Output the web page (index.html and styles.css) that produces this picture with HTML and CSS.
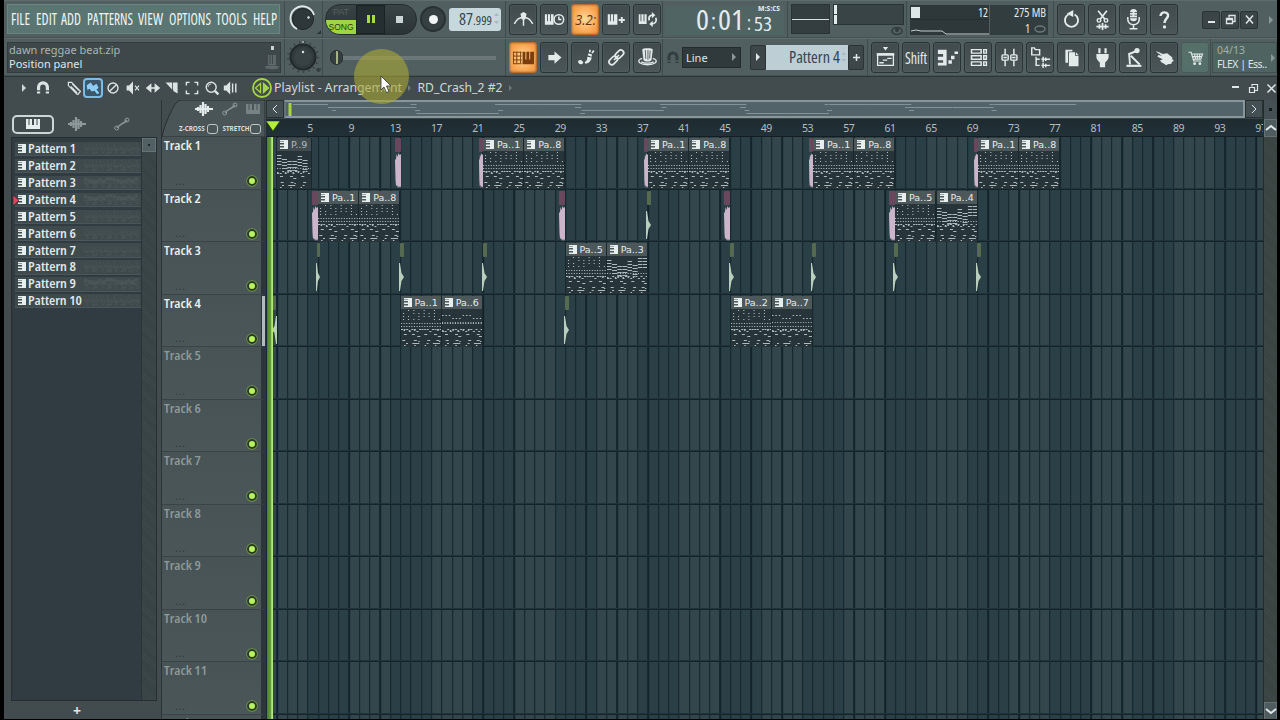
FILE: index.html
```html
<!DOCTYPE html>
<html lang="en">
<head>
    <meta charset="UTF-8">
    <title>Playlist - Arrangement</title>
    <link rel="stylesheet" href="styles.css">
</head>
<body>
<div class="app">
    <header class="toolbar">
        <div class="bar">
            <div class="panel menu-panel">
                <nav class="menu">
                    <svg width="273" height="29" class="cond menu-text">
                        <text x="3" y="19.500" textLength="19">FILE</text>
                        <text x="28" y="19.500" textLength="21">EDIT</text>
                        <text x="53" y="19.500" textLength="20">ADD</text>
                        <text x="79" y="19.500" textLength="46">PATTERNS</text>
                        <text x="130" y="19.500" textLength="25">VIEW</text>
                        <text x="161" y="19.500" textLength="42">OPTIONS</text>
                        <text x="208" y="19.500" textLength="31">TOOLS</text>
                        <text x="245" y="19.500" textLength="24">HELP</text>
                    </svg>
                </nav>
            </div>
            <div class="panel knob-panel">
                <svg width="36" height="36" viewBox="0 0 36 36">
                    <circle cx="17" cy="18" r="10.5" fill="#2e3739" stroke="#1f2628"/>
                    <path d="M11 28A12 12 0 1 1 28 14" fill="none" stroke="#dfe8e8" stroke-width="1.8"/>
                    <circle cx="22.5" cy="16.500" r="1.2" fill="#dfe8e8"/>
                    <path d="M35 29v4h-4z" fill="#2a3335"/>
                </svg>
            </div>
            <div class="panel transport">
                <div class="play-group">
                    <div class="mode"><span class="pat">PAT</span><span class="song">SONG</span></div>
                    <div class="pause"><i></i><i></i></div>
                    <div class="stop"><i></i></div>
                </div>
                <div class="record"><i></i></div>
                <div class="tempo">
                    <svg width="52" height="22" class="cond dark">
                        <text x="10" y="17" font-size="17" textLength="14">87</text>
                        <text x="24" y="17" font-size="13" textLength="19">.999</text>
                        <path d="M45 8l2.500-3 2.500 3zM45 13l2.500 3 2.500-3z" fill="#a9b9bd"/>
                    </svg>
                </div>
            </div>
            <div class="panel buttons">
                <div class="btn"><svg class="icon" viewBox="0 0 24 24"><path d="M1.500 17c3-6 7-7.500 10.500-7.500s7.500 1.500 10.500 7.500M12 8v11"/><path class="f" d="M8.500 5.500L12 3.500l3.500 2L14 12h-4z"/></svg></div>
                <div class="btn"><svg class="icon" viewBox="0 0 24 24"><path class="f" d="M1 6h2.500v8h1V6H7v8h1V6h3v12H1z"/><circle cx="17" cy="12" r="5.500"/><path d="M17 8.500V12h3"/></svg></div>
                <div class="btn on"><svg width="27" height="28"><text x="3" y="19" font-size="14" font-style="italic" font-family="Open Sans" fill="#63330c" textLength="21">3.2:</text></svg></div>
                <div class="btn"><svg class="icon" viewBox="0 0 24 24"><path class="f" d="M2 6h2.500v8h1V6H8v8h1V6h4v12H2z"/><path d="M18 9v7M14.500 12.500h7" stroke-width="2.200"/></svg></div>
                <div class="btn"><svg class="icon" viewBox="0 0 24 24"><path class="f" d="M2 6h2v8h1V6h2.500v8h1V6H11v11H2z"/><path d="M14 13c-1-3 0-6 4-6M21.500 10c1.500 4-.5 7-4.500 7" stroke-width="2"/><path class="f" d="M17 3.500l4 3.500-4 3.500zM18 13.500l-4 3.500 4 3.500z"/></svg></div>
            </div>
            <div class="panel time">
                <svg width="124" height="37" class="cond light">
                    <rect x="2" y="5" width="119" height="29" fill="#4f6463"/>
                    <text x="33" y="29" font-size="28" textLength="13">0</text>
                    <text x="48" y="28" font-size="22" textLength="5">:</text>
                    <text x="55" y="29" font-size="28" textLength="26">01</text>
                    <text x="84" y="29" font-size="20" textLength="4">:</text>
                    <text x="91" y="30" font-size="20" textLength="18">53</text>
                    <text x="95" y="10" font-size="7" font-weight="700" textLength="22">M:S:CS</text>
                </svg>
            </div>
            <div class="panel scope">
                <div class="wave-view"></div>
                <div class="peak-view"><i></i><i></i></div>
                <svg class="eye" width="12" height="8"><ellipse cx="6" cy="4" rx="5" ry="3.500" fill="none" stroke="#303a3c" stroke-width="1.500"/><circle cx="6" cy="3" r="2" fill="#303a3c"/></svg>
            </div>
            <div class="panel perf">
                <svg width="144" height="37" class="cond light">
                    <rect x="3" y="4" width="79" height="30" fill="#2e383b"/>
                    <rect x="83" y="4" width="58" height="30" fill="#323d40"/>
                    <rect x="3" y="18" width="79" height="1" fill="#252e31"/>
                    <rect x="4" y="6" width="9" height="11" fill="#dce6e7"/>
                    <text x="71" y="15.500" font-size="12" textLength="10">12</text>
                    <text x="107" y="15.500" font-size="12" textLength="32">275 MB</text>
                    <text x="118" y="31.500" font-size="12" textLength="5">1</text>
                    <path d="M4 30l5-1 5 1h21l4 3h43" fill="none" stroke="#c3cdce"/>
                    <ellipse cx="133" cy="28" rx="5" ry="3" fill="none" stroke="#6b7678" stroke-width="1.500"/>
                </svg>
            </div>
            <div class="panel buttons right">
                <div class="btn"><svg class="icon" viewBox="0 0 24 24"><path d="M8.500 6.300a7.500 7.500 0 1 0 7 0" stroke-width="2.200"/><path class="f" d="M14 1v8L6.500 5.500z"/></svg></div>
                <div class="btn"><svg class="icon" viewBox="0 0 24 24"><path d="M7 2l7.500 9.500M17 2L9.500 11.500" stroke-width="2"/><circle cx="8" cy="13" r="2"/><circle cx="16" cy="13" r="2"/><path d="M5 20h14M8.500 17.500v5M12 16v8M15.500 17.500v5" stroke-width="2"/></svg></div>
                <div class="btn"><svg class="icon" viewBox="0 0 24 24"><rect class="f" x="8" y="0" width="8" height="14" rx="4"/><path d="M8 4h3M8 7h3M13 4h3M13 7h3M8 10h8" stroke="#465053" stroke-width="1"/><path d="M5.500 9v3a6.500 6 0 0 0 13 0V9M12 18v4M7.500 22.500h9"/></svg></div>
                <div class="btn"><svg class="icon" viewBox="0 0 24 24"><path d="M7.500 8c0-6 9.500-5 8.500 0c-.5 3-4 3.500-4 8" stroke-width="2.800"/><circle class="f" cx="12" cy="20.500" r="1.900"/></svg></div>
            </div>
            <div class="panel win">
                <span><svg width="13" height="13"><path d="M3 9h7" stroke-width="2"/></svg></span>
                <span><svg width="13" height="13"><path d="M2.500 5.500h6v5h-6zM5 4.500v-2h6v6h-2M2.500 6.500h6" stroke-width="1.300"/></svg></span>
                <span><svg width="13" height="13"><path d="M3 2.500l7 8M10 2.500l-7 8" stroke-width="1.500"/></svg></span>
                <b></b>
            </div>
        </div>

        <div class="bar">
            <div class="panel hint-panel">
                <div class="hint">
                    <p class="file">dawn reggae beat.zip</p>
                    <p>Position panel</p>
                    <svg class="hat" width="14" height="26"><rect x="6" y="1" width="3" height="4" fill="#c9d2d3"/><path d="M3 10h8v10H3zM0 22c0-2 14-2 14 0c0 3-14 3-14 0z" fill="#5c686a"/><path d="M5 10v9M7.500 10v9" stroke="#3e484a"/></svg>
                </div>
            </div>
            <div class="panel knob-panel">
                <svg width="36" height="36" viewBox="0 0 36 36">
                    <circle cx="17" cy="18" r="15" fill="none" stroke="#384244" stroke-width="2" stroke-dasharray="1.500 4"/>
                    <circle cx="17" cy="18" r="12.500" fill="#313a3c" stroke="#20282a" stroke-width="2"/>
                    <circle cx="17" cy="18" r="9" fill="#384143"/>
                    <circle cx="17" cy="13" r="1.200" fill="#dfe8e8"/><circle cx="17" cy="3" r="1" fill="#aab5b6"/>
                    <path d="M31 29v3h3v-3M32.500 29v3" stroke="#2a3335" fill="none"/>
                </svg>
            </div>
            <div class="panel position"><div class="track-line"></div><div class="thumb"></div></div>
            <div class="panel buttons">
                <div class="btn on"><svg class="icon brown" viewBox="0 0 24 24"><path d="M1 6.500h9M1 10.500h9M1 14.500h9M1 18.500h9M1.500 6v12M5 6v12M9 6v12" stroke-width="1"/><path class="f" d="M11 6h3v8h1V6h3v8h1V6h4v13H11z"/></svg></div>
                <div class="btn"><svg class="icon" viewBox="0 0 24 24"><path class="f" d="M5 9h7V5l8 7-8 7v-4H5z"/></svg></div>
                <div class="btn"><svg class="icon" viewBox="0 0 24 24"><path class="f" d="M3.500 16c2-2 5-1 6 2c-2 3-6 2-6-2zM11 17c3-1 3-4 3-6l5 1c0 3-3 7-7 7zM14.500 9.500l1-2.500 4 1.500-.5 2.500z"/><path d="M17 6V3M19.500 7l2-3" stroke-width="2"/></svg></div>
                <div class="btn"><svg class="icon" viewBox="0 0 24 24"><g transform="rotate(-45 12 12)" stroke-width="1.900"><rect x="1.500" y="8.500" width="11" height="6.500" rx="3.250"/><rect x="11.500" y="8.500" width="11" height="6.500" rx="3.250"/><path d="M8 12h8"/></g></svg></div>
                <div class="btn"><svg class="icon" viewBox="0 0 24 24"><path class="f" d="M6 3c0-2 12-2 12 0l-1.500 12c-1 2-8 2-9 0z"/><path d="M9.500 3.500l.5 10M12.500 3.500v11M15 4l-.5 9" stroke="#485255" stroke-width="1"/><path d="M6 13c-4 1-5 3-3 5c4 3 14 3 18 0c2-2 1-4-3-5M5 17c3 2 11 2 14 0" stroke-width="1.500"/></svg></div>
            </div>
            <div class="panel snap">
                <svg width="14" height="14" viewBox="0 0 14 14"><path d="M3 13V7a4 4 0 0 1 8 0v6" fill="none" stroke="#343e40" stroke-width="3"/><path d="M1 11h4M9 11h4" stroke="#59666a"/></svg>
                <div class="select">Line<b></b></div>
            </div>
            <div class="panel pattern-panel">
                <div class="small"><b></b></div>
                <div class="pattern-name">
                    <svg width="82" height="24" class="cond dark"><text x="23" y="18" font-size="17" textLength="51">Pattern 4</text><path d="M75.500 10l2.300-3 2.300 3zM75.500 14l2.300 3 2.300-3z" fill="#a9b9bd"/></svg>
                </div>
                <div class="small plus"><svg width="9" height="9"><path d="M4.500 1v7M1 4.500h7" stroke="#dfe7e8" stroke-width="1.500"/></svg></div>
            </div>
            <div class="panel buttons tools">
                <div class="btn"><svg class="icon" viewBox="0 0 24 24"><path class="f" d="M9 0h6l-3 4zM2 7h20v3H2z"/><path d="M3 8h18v13H3zM5 18h5M9 15h5M14 13h5" stroke-width="1.500"/></svg></div>
                <div class="btn"><svg width="27" height="28" class="cond light"><text x="2" y="20" font-size="16" textLength="22">Shift</text></svg></div>
                <div class="btn"><svg class="icon" viewBox="0 0 24 24"><path class="f" d="M1 3h10v18H1v-3h6v-3H1v-4h6V8H1zM13 15h4v4h-4zM16 10h4v4h-4zM20 5h4v3h-4z"/></svg></div>
                <div class="btn"><svg class="icon" viewBox="0 0 24 24" stroke-width="1.300"><path d="M4 3h11v4H4zM4 10h11v4H4zM4 17h11v4H4zM18 3h3v4h-3zM18 10h3v4h-3zM18 17h3v4h-3z"/></svg></div>
                <div class="btn"><svg class="icon" viewBox="0 0 24 24" stroke-width="1.500"><path d="M7 2v7M7 15v7M17 2v7M17 15v7"/><rect x="3.500" y="9" width="7" height="6" rx="1"/><rect x="13.500" y="9" width="7" height="6" rx="1"/><path d="M5 12h4M15 12h4"/></svg></div>
                <div class="btn"><svg class="icon" viewBox="0 0 24 24" stroke-width="1.500"><path d="M2 1h3l1 2h5v6H2zM7 11v10h4M7 14h4M13 14h10M13 21h10M15 11v6M18 12v4M15 18v6M18 19v4"/></svg></div>
                <div class="btn"><svg class="icon" viewBox="0 0 24 24"><path class="f" d="M5 3h8v2H8v13H5z"/><path class="f" d="M9 6h7v4h4v12H9zM17 6l3 3h-3z"/></svg></div>
                <div class="btn"><svg class="icon" viewBox="0 0 24 24"><path class="f" d="M5 8h14v3c0 4-4 6-4 7v5H9v-5c0-1-4-3-4-7z"/><path d="M8.500 7V1.500M15.500 7V1.500" stroke-width="2.500"/></svg></div>
                <div class="btn"><svg class="icon" viewBox="0 0 24 24"><path d="M17 4L7 8l1 12M9 10l10 10" stroke-width="2.200"/><circle class="f" cx="16" cy="4" r="3"/><path d="M4 21.500h17" stroke-width="2.500"/></svg></div>
                <div class="btn"><svg class="icon" viewBox="0 0 24 24"><path class="f" d="M2 5c3 0 6 2 8 3l5-1 6 5-1 7-7 1-5-3-1-2 3-1-6-3 1-2 4 1z"/><path d="M13 20l9-5" stroke-width="2"/></svg></div>
                <div class="btn cart"><svg class="icon" viewBox="0 0 24 24"><path d="M4 6h3l3 10h9M8 8h12l-2 6H9M11 8l1 6M14 8v6M17 8l-1 6M8 11h11" stroke-width="1.300"/><circle class="f" cx="11" cy="19" r="1.600"/><circle class="f" cx="17" cy="19" r="1.600"/></svg></div>
            </div>
            <div class="panel news">
                <div>
                    <p class="dim">04/13</p>
                    <p>FLEX | Ess..</p>
                    <b></b>
                </div>
            </div>
        </div>
    </header>

    <section class="playlist">
        <div class="titlebar">
            <div class="tools-row">
                <b class="arrow"></b>
                <svg class="tool magnet" viewBox="0 0 20 20"><path d="M4.500 17V9a5.500 5.500 0 0 1 11 0v8" stroke-width="4"/><path d="M1 13.500h7M12 13.500h7" stroke="#434d50" stroke-width="1.500"/></svg>
                <svg class="tool" viewBox="0 0 20 20"><path d="M3 3l4 0 11 11-3 4-1 0L3 7zM6 8l8 8M8 5l8 8" stroke-width="1.500"/></svg>
                <svg class="tool brush" viewBox="0 0 20 20"><path class="f" d="M1 6l6-4 3 5 5-3 3 6-3 2 4 5-3 2-4-5-4 1-3-4-3 2z"/></svg>
                <svg class="tool" viewBox="0 0 20 20"><circle cx="10" cy="10" r="6.200" stroke-width="1.800"/><path d="M5.500 14.500l9-9" stroke-width="1.800"/></svg>
                <svg class="tool" viewBox="0 0 20 20"><path class="f" d="M2 7h3l5-5v16l-5-5H2z"/><path d="M12.500 7l5 6M17.500 7l-5 6" stroke-width="1.500"/></svg>
                <svg class="tool" viewBox="0 0 20 20"><path class="f" d="M1 10l7-6v12zM19 10l-7-6v12z"/><path d="M6 10h8" stroke-width="2"/></svg>
                <svg class="tool" viewBox="0 0 20 20"><path class="f" d="M2 3h8v9zM11 3h6v14l-5-3-1-3z"/></svg>
                <svg class="tool" viewBox="0 0 20 20"><path d="M3 7V3h4M13 3h4v4M17 13v4h-4M7 17H3v-4" stroke-width="1.800"/></svg>
                <svg class="tool" viewBox="0 0 20 20"><circle cx="9" cy="9" r="6.200" stroke-width="1.800"/><path d="M13.500 13.500L18 18" stroke-width="3"/><path d="M5 9a4 4 0 0 1 4-4" stroke-width="1"/></svg>
                <svg class="tool" viewBox="0 0 20 20"><path class="f" d="M1 7h3l5-5v16l-5-5H1z"/><path d="M12 4.500v11M16 4.500v11" stroke-width="1.800"/></svg>
                <svg class="green" width="20" height="20"><circle cx="10" cy="10" r="9" fill="none" stroke="#a6d648" stroke-width="1.800"/><path d="M8.500 5.500v9L3.500 10zM11.500 5.500v9l5-4.500z" fill="none" stroke="#a6d648" stroke-width="1.300"/><path d="M11.500 5.500v9l5-4.500z" fill="#a6d648"/></svg>
            </div>
            <div class="crumbs">
                <svg width="246" height="20"><text x="0" y="14" textLength="128">Playlist - Arrangement</text><path d="M134 7l3 3-3 3z" fill="#6d797b"/><text x="143.500" y="14" textLength="85">RD_Crash_2 #2</text><path d="M235 7l3 3-3 3z" fill="#6d797b"/></svg>
            </div>
            <div class="win-small">
                <svg width="11" height="11"><path d="M2 4h7" stroke-width="2"/></svg>
                <svg width="11" height="11"><path d="M1.500 4.500h5v5h-5zM4 3.500v-2h5.500v6H7" stroke-width="1.200"/></svg>
                <svg width="11" height="11"><path d="M1.500 1.500l8 8M9.500 1.500l-8 8" stroke-width="1.500"/></svg>
            </div>
        </div>

        <div class="body">
            <aside class="picker">
                <div class="tabs">
                    <div class="tab active"><svg width="16" height="12"><path d="M1 1h2.500v6h1V1H7v6h2V1h2.500v6h1V1H15v10H1z" fill="#e6eeee"/></svg></div>
                    <svg width="20" height="16" class="faint"><path d="M1 8h18M4 6v4M6.500 4v8M9 1v14M11.500 3v10M14 5v6M16.500 7v2" stroke-width="2.200"/></svg>
                    <svg width="16" height="14" class="faint"><path d="M3 11c2-4 7-4 10-8" stroke-width="1.500"/><circle cx="2.700" cy="11" r="2"/><circle cx="13" cy="3" r="2"/></svg>
                </div>
                <div class="list-wrap">
                    <div class="list" id="patterns"></div>
                    <div class="scroll"><span></span></div>
                </div>
                <div class="add">+</div>
            </aside>

            <div class="tracks">
                <div class="track-top">
                    <svg class="shape" width="104" height="37"><path d="M1 37c1-8 8-24 12-31c3-5 5-6 10-6h81v37z" fill="#4a5557" stroke="#262f31"/></svg>
                    <div class="kinds">
                        <svg width="20" height="16" class="bright"><path d="M1 8h18M4 6v4M6.500 4v8M9 1v14M11.500 3v10M14 5v6M16.500 7v2" stroke-width="2.200"/></svg>
                        <svg width="16" height="14" class="faint"><path d="M3 11c2-4 7-4 10-8" stroke-width="1.300"/><circle cx="2.700" cy="11" r="2"/><circle cx="13" cy="3" r="2"/></svg>
                        <svg width="14" height="12"><path d="M0 1h2.500v6h1V1H6v6h2V1h2.500v6h1V1H14v10H0z" fill="#778284"/></svg>
                    </div>
                    <div class="checks"><span>Z-CROSS</span><i></i><span>STRETCH</span><i></i></div>
                </div>
                <div id="tracks"></div>
            </div>

            <div class="arranger">
                <div class="overview">
                    <div class="ov-btn"><svg width="8" height="10"><path d="M6 1L2 5l4 4"/></svg></div>
                    <div class="ov-view"><svg id="minimap" width="955" height="13"></svg></div>
                    <div class="ov-btn"><svg width="8" height="10"><path d="M2 1l4 4-4 4"/></svg></div>
                </div>
                <div class="ruler" id="ruler"></div>
                <div class="lanes" id="lanes"></div>
                <svg class="marker" width="14" height="11"><path d="M0 0h14L7 10z" fill="#b5ee3c" stroke="#2c4413" stroke-width=".6"/></svg>
                <div class="playhead"></div>
            </div>

            <div class="vscroll">
                <div class="corner"></div>
                <div class="cap"><svg width="12" height="8"><path d="M1 6l5-4 5 4"/></svg></div>
                <div class="rail"></div>
                <div class="cap"><svg width="12" height="8"><path d="M1 2l5 4 5-4"/></svg></div>
            </div>
        </div>
    </section>

    <div class="spot"></div>
    <svg class="cursor" width="14" height="20"><path d="M1 1l0 14 3-3 2.500 5.500 2.500-1-2.500-5.500H11z" fill="#fff" stroke="#333" stroke-width=".8"/></svg>
</div>
<script src="playlist.js"></script>
</body>
</html>
```
FILE: styles.css
```css
* {
    box-sizing: border-box;
}

body {
    margin: 0;
    background: #000;
    font-family: "Noto Sans", "Open Sans", sans-serif;
    color: #dfe7e8;
    overflow: hidden;
}

p {
    margin: 0;
}

svg {
    display: block;
    flex: none;
}

.app {
    position: relative;
    width: 1273px;
    height: 719px;
    margin-left: 4px;
    background: #424c4f;
    overflow: hidden;
}

/* toolbar */
.toolbar {
    height: 77px;
    background: #525f61;
    border-bottom: 1px solid #2c3537;
}

.bar {
    display: flex;
    height: 38px;
    border-top: 1px solid #5f6c6e;
    border-bottom: 1px solid #465254;
}

.panel {
    flex: none;
    height: 37px;
    border-right: 1px solid #404b4d;
}

.menu-panel,
.hint-panel {
    width: 281px;
    padding: 3px 3px;
}

.menu {
    width: 273px;
    height: 30px;
    background: #5b7572;
    border: 1px solid #6a8481;
}

.cond {
    font-family: "Open Sans", "Noto Sans", sans-serif;
    font-stretch: 75%;
}

.menu-text text {
    font-size: 16px;
    fill: #eef5f4;
}

.light text {
    fill: #e3ebec;
}

.dark text {
    fill: #35464e;
}

.hint {
    position: relative;
    width: 274px;
    height: 31px;
    padding: 0 1px;
    background: #3e484a;
    border: 1px solid #333d3f;
    font-size: 11px;
    line-height: 14px;
}

.hint .file {
    color: #a9b5b5;
}

.hat {
    position: absolute;
    right: 1px;
    top: 2px;
}

.knob-panel {
    width: 38px;
    padding-left: 1px;
}

.transport {
    display: flex;
    align-items: center;
    width: 183px;
    padding: 0 0 1px 2px;
}

.play-group {
    display: flex;
    width: 92px;
    height: 31px;
    border-radius: 15px;
    background: linear-gradient(#3a4446, #2a3335);
    border: 1px solid #252d2f;
    overflow: hidden;
}

.mode {
    width: 30px;
    font: 9px/14px "Liberation Sans", sans-serif;
    text-align: center;
}

.mode span {
    display: block;
    height: 15px;
}

.pat {
    color: #55605f;
}

.song {
    background: #9fd63f;
    color: #2c3b12;
    font-size: 8.5px;
}

.pause,
.stop {
    display: flex;
    align-items: center;
    justify-content: center;
    gap: 2px;
    width: 29px;
}

.pause {
    background: #252e30;
    border: 1px solid #1b2224;
}

.pause i {
    width: 3px;
    height: 8px;
    background: #a8dc3c;
}

.stop i {
    width: 7px;
    height: 7px;
    background: #ccd5d5;
}

.record {
    display: flex;
    align-items: center;
    justify-content: center;
    width: 26px;
    height: 26px;
    margin: 0 3px;
    border-radius: 50%;
    background: #364042;
    border: 2px solid #283133;
}

.record i {
    width: 9px;
    height: 9px;
    border-radius: 50%;
    background: #f1f5f5;
}

.tempo {
    width: 52px;
    height: 23px;
    border-radius: 3px;
    background: #c7d8dd;
}

.buttons {
    display: flex;
    gap: 3px;
    width: 157px;
    padding: 3px 0 0 3px;
}

.btn {
    display: flex;
    align-items: center;
    justify-content: center;
    width: 28px;
    height: 31px;
    flex: none;
    border: 1px solid #2a3335;
    border-radius: 3px;
    background: linear-gradient(#414b4e, #4b5659);
    box-shadow: inset 0 0 2px #5c686b;
}

.btn.on {
    background: radial-gradient(#ffd9a0, #fba650 65%, #f09040);
    border-color: #b86c2d;
}

.btn.cart {
    background: #547069;
    border-color: #465c58;
}

.icon {
    width: 21px;
    height: 21px;
    fill: none;
    stroke: #e3eaea;
    stroke-width: 1.7;
}

.icon .f {
    fill: #e3eaea;
    stroke: none;
}

.brown {
    width: 23px;
    height: 23px;
    stroke: #7b3d0c;
}

.brown .f {
    fill: #7b3d0c;
}

.time {
    width: 125px;
}

.scope {
    position: relative;
    display: flex;
    gap: 3px;
    width: 119px;
    padding: 3px 2px 3px 3px;
}

.wave-view {
    width: 39px;
    height: 30px;
    background: linear-gradient(#343e41 14px, #d5dede 14px, #d5dede 15px, #343e41 15px);
    border: 1px solid #2a3335;
}

.peak-view {
    display: flex;
    flex-direction: column;
    gap: 1px;
    width: 71px;
    height: 21px;
    background: #394447;
    border: 1px solid #2a3335;
}

.peak-view i {
    width: 3px;
    height: 9px;
    background: #e3eaea;
}

.eye {
    position: absolute;
    right: 3px;
    bottom: 3px;
}

.perf {
    width: 147px;
}

.buttons.right {
    width: 128px;
    border: none;
}

.win {
    display: flex;
    align-items: center;
    width: 92px;
    gap: 1px;
    padding-left: 20px;
    border: none;
}

.win span {
    display: flex;
    align-items: center;
    justify-content: center;
    flex: none;
    width: 18px;
    height: 18px;
    background: #3b4548;
    border: 1px solid #2a3335;
    border-radius: 2px;
}

.win svg,
.win-small svg,
.ov-btn svg,
.cap svg {
    fill: none;
    stroke: #dfe7e8;
}

.win b,
.select b,
.small b,
.news b,
.arrow {
    flex: none;
    border: 4px solid transparent;
    border-left: 4px solid #8b9899;
    border-right: none;
}

.win b {
    margin-left: 10px;
}

.position {
    display: flex;
    align-items: center;
    width: 183px;
    padding-left: 7px;
}

.thumb {
    order: -1;
    width: 13px;
    height: 15px;
    border-radius: 7px;
    background: linear-gradient(90deg, transparent 5px, #a5b284 5px, #a5b284 7px, transparent 7px), #353f41;
    border: 1px solid #252d2f;
}

.track-line {
    width: 153px;
    height: 4px;
    background: #6b7779;
}

.snap {
    display: flex;
    align-items: center;
    gap: 2px;
    width: 82px;
    padding: 0 0 1px 3px;
    border: none;
}

.select {
    display: flex;
    align-items: center;
    justify-content: space-between;
    width: 59px;
    height: 21px;
    padding: 0 4px 0 3px;
    background: #303a3d;
    border: 1px solid #232b2d;
    font-size: 11px;
}

.pattern-panel {
    display: flex;
    align-items: center;
    width: 123px;
    padding: 0 0 1px 5px;
}

.small {
    display: flex;
    align-items: center;
    justify-content: center;
    flex: none;
    width: 16px;
    height: 25px;
    background: #3d474a;
    border: 1px solid #2a3335;
    border-radius: 2px;
}

.small b {
    border-left-color: #dfe7e8;
}

.pattern-name {
    width: 82px;
    height: 25px;
    background: #bdced4;
}

.tools {
    width: 343px;
}

.news {
    flex: 1;
    padding: 3px 0 0 1px;
    border: none;
}

.news div {
    position: relative;
    height: 31px;
    padding: 0 4px;
    background: #4f6461;
    border: 1px solid #3f504e;
    font-size: 10.5px;
    line-height: 14px;
    letter-spacing: -0.5px;
    white-space: nowrap;
}

.news .dim {
    color: #9fb0ae;
    letter-spacing: 0;
}

.news b {
    position: absolute;
    right: 1px;
    top: 11px;
}

/* playlist window */
.titlebar {
    display: flex;
    align-items: center;
    height: 22px;
    padding-left: 18px;
    background: #424c4f;
}

.tools-row {
    display: flex;
    align-items: center;
    width: 252px;
}

.arrow {
    border-left-color: #ced7d8;
}

.tool {
    width: 16px;
    height: 16px;
    margin-right: 3.7px;
    fill: none;
    stroke: #dbe3e3;
    stroke-width: 2;
}

.tool .f {
    fill: #dbe3e3;
    stroke: none;
}

.magnet {
    margin-left: 9px;
    margin-right: 14.500px;
}

.brush {
    width: 20px;
    height: 20px;
    margin: 0 2px 0 -2px;
    padding: 1px;
    border: 2px solid #7ebbe4;
    border-radius: 4px;
    background: #3d5668;
}

.brush .f {
    fill: #8fcdf5;
}

.green {
    margin-left: 8.500px;
}

.crumbs {
    flex: 1;
}

.crumbs text {
    font-size: 12.5px;
    fill: #cfd8d9;
}

.win-small {
    display: flex;
    gap: 7px;
    padding-right: 0;
}

.body {
    display: flex;
    height: 620px;
    margin-top: 1px;
}

.picker {
    width: 158px;
    padding-left: 7px;
    border-right: 1px solid #2b3437;
}

.tabs {
    display: flex;
    align-items: center;
    height: 37px;
    padding: 11px 0 0 1px;
}

.tab {
    display: flex;
    align-items: center;
    justify-content: center;
    width: 42px;
    height: 19px;
    margin-right: 13px;
    border: 2px solid #cdd6d6;
    border-radius: 5px;
}

.faint {
    fill: none;
    stroke: #8c9899;
}

.bright {
    fill: none;
    stroke: #e3eaea;
}

.tabs .faint + .faint {
    margin-left: 27px;
}

.list-wrap {
    display: flex;
    height: 564px;
    width: 146px;
    border: 1px solid #252e31;
}

.list {
    width: 131px;
    padding: 4px 0 0 3px;
    background: #303c42;
}

.item {
    position: relative;
    display: flex;
    align-items: center;
    height: 14.4px;
    margin-bottom: 2.5px;
    width: 126px;
    background: #3f4a4d;
    border-bottom: 1px solid #4a5659;
}

.item .clip-icon {
    margin: 0 2px 0 2px;
}

.item text,
.track text {
    font-family: "Open Sans", "Noto Sans", sans-serif;
    font-size: 12px;
    font-weight: 600;
    font-stretch: 85%;
    fill: #e1e9ea;
}

.item .preview {
    opacity: 0.2;
}

.item .current {
    position: absolute;
    left: -3px;
    top: 2px;
}

.scroll {
    flex: 1;
    background: repeating-linear-gradient(45deg, #364144 0, #364144 1px, #3c484a 1px, #3c484a 2px);
    border-left: 1px solid #2a3336;
}

.scroll span {
    display: flex;
    height: 14px;
    background: #526063;
    border: 1px solid #667477;
}

.scroll span::before {
    content: "";
    width: 2px;
    height: 2px;
    margin: 5px;
    background: #1e2628;
}

.add {
    height: 19px;
    padding-right: 18px;
    text-align: center;
    font-size: 14px;
    font-weight: 700;
    line-height: 19px;
}

.tracks {
    width: 104px;
}

.track-top {
    position: relative;
    height: 37px;
}

.shape {
    position: absolute;
    left: -1px;
    top: 0;
}

.kinds {
    position: relative;
    display: flex;
    align-items: center;
    gap: 8px;
    padding: 0 0 0 32px;
    height: 18px;
}

.checks {
    position: relative;
    display: flex;
    align-items: center;
    padding: 6px 0 0 17px;
    font: 700 6.3px/10px "Noto Sans", sans-serif;
    white-space: nowrap;
    color: #d6dede;
}

.checks span {
    width: 28px;
}

.checks i {
    flex: none;
    width: 11px;
    height: 10px;
    margin-right: 5px;
    border: 1px solid #bec8c8;
    border-radius: 3px;
}

.track {
    position: relative;
    display: flex;
    height: 52.5px;
    background: linear-gradient(#485355, #4b5658);
    border-bottom: 1px solid #3a4446;
    border-right: 5px solid #2b353a;
}

.track text {
    fill: #e9f0f0;
}

.track.empty text {
    fill: #8d999a;
}

.track .dots {
    position: absolute;
    left: 13px;
    bottom: 3px;
    font-size: 10px;
    line-height: 10px;
    letter-spacing: 1px;
    color: #2d3739;
}

.led {
    position: absolute;
    right: 4px;
    bottom: 2.5px;
    width: 10px;
    height: 10px;
    border-radius: 50%;
    background: #b6f35f;
    border: 2px solid #2b3b23;
    box-shadow: 0 0 0 0.7px #79a84c;
}

.track.selected::after {
    content: "";
    position: absolute;
    right: -4px;
    top: 1px;
    width: 3px;
    height: 50px;
    background: #aebcc0;
}

.arranger {
    position: relative;
    width: 997px;
    overflow: hidden;
}

.overview {
    display: flex;
    height: 19px;
    background: #37444a;
}

.ov-btn {
    display: flex;
    align-items: center;
    justify-content: center;
    width: 18px;
    height: 18px;
    background: #434f52;
    border: 1px solid #28322f;
}

.ov-view {
    flex: 1;
    height: 18px;
    padding: 1px 0;
    background: #53636a;
    border: 2px solid #87979b;
    border-left-color: #637379;
}

.ruler {
    display: flex;
    height: 18px;
    padding-left: 0.6px;
    background: linear-gradient(#1e2b31, #223138);
    border-bottom: 1px solid #141e22;
}

.ruler span {
    flex: none;
    width: 41.224px;
    margin-left: -0.5px;
    margin-right: 0.5px;
    font: 10.5px/18px "Noto Sans", sans-serif;
    letter-spacing: -0.4px;
    color: #b5bfc1;
}

.ruler span:first-child {
    visibility: hidden;
}

.lane {
    position: relative;
    height: 52.5px;
    border-bottom: 1px solid #14242b;
    box-shadow: inset 0 -1px #213339;
}

.lanes {
    background-image:
        repeating-linear-gradient(90deg, #12232a 0, #12232a 1.2px, transparent 1.2px, transparent 10.306px),
        repeating-linear-gradient(90deg, #32464c 0, #32464c 41.224px, #2b3f46 41.224px, #2b3f46 82.448px);
    background-position: 0.2px 0;
    height: 600px;
}

.clip,
.audio {
    position: absolute;
    top: 1px;
    height: 51px;
}

.clip {
    background: #27343a;
    border-right: 1px solid #1a272c;
}

.clip-head {
    display: flex;
    align-items: center;
    height: 13px;
    padding-left: 2px;
    gap: 3px;
    background: #4c585a;
    font: 9.5px/13px "DejaVu Sans", sans-serif;
    white-space: nowrap;
    color: #e6edee;
}

.clip.muted .clip-head {
    background: #404c4f;
    color: #b3bdbf;
}

.audio .tag {
    position: absolute;
    top: 0;
    height: 14px;
    border-radius: 1px;
}

.audio.crash .tag {
    background: #68485c;
}

.audio.hit .tag {
    background: #566a50;
}

.audio svg {
    position: absolute;
    left: 0;
    top: 0;
}

.marker {
    position: absolute;
    left: 0;
    top: 21px;
}

.playhead {
    position: absolute;
    left: 1px;
    top: 37px;
    width: 6px;
    height: 590px;
    background: linear-gradient(90deg, #4c7a34, #669f38 60%, #b0e87b 80%);
}

.vscroll {
    display: flex;
    flex-direction: column;
    width: 14px;
    border-left: 1px solid #222c2f;
}

.corner {
    height: 19px;
    background: radial-gradient(circle, #141b1d 1.5px, #434f52 2px);
}

.cap {
    display: flex;
    align-items: center;
    justify-content: center;
    height: 18px;
    background: #4f5c5f;
    border: 1px solid #647174;
}

.cap path {
    stroke-width: 2;
}

.rail {
    flex: 1;
    background: repeating-linear-gradient(45deg, #38433f 0, #38433f 1px, #3e4947 1px, #3e4947 2px);
}

/* pointer */
.spot {
    position: absolute;
    left: 350px;
    top: 49px;
    width: 55px;
    height: 55px;
    border-radius: 50%;
    background: rgba(170, 168, 50, 0.6);
}

.cursor {
    position: absolute;
    left: 376px;
    top: 75px;
}
```
FILE: playlist.js
```js
const BAR = 10.306;
const ORIGIN = 266;

// [lane, x of clip, pattern number]
const clips = [
    [0, 277, 9], [0, 483, 1], [0, 524.2, 8], [0, 648, 1], [0, 689.2, 8],
    [0, 813, 1], [0, 854.2, 8], [0, 978, 1], [0, 1019, 8],
    [1, 318, 1], [1, 359.2, 8], [1, 895, 5], [1, 936.5, 4],
    [2, 565.5, 5], [2, 606.7, 3],
    [3, 400.5, 1], [3, 441.7, 6], [3, 730.5, 2], [3, 771.7, 7]
];

const crashes = [
    [0, 394.5, 6], [0, 479, 4], [0, 644, 4], [0, 808.5, 4], [0, 973.5, 4],
    [1, 312, 6], [1, 559, 6], [1, 724, 6], [1, 889, 6]
];

const hits = [
    [1, 645.5], [2, 316, 4], [2, 399], [2, 482], [2, 728.5], [2, 811],
    [2, 893], [2, 975.5], [3, 564]
];

const icon = '<svg class="clip-icon" width="9" height="9"><path d="M1 0h8v9H1V7.500h4V6H1V4.500h4V3H1V1.500h4V1H1z" fill="#e6eeee"/></svg>';

// dots and dashes of the notes inside a pattern
function notes(n, width) {
    let seed = 7;
    const rnd = () => (seed = (seed * 16807) % 2147483647) / 2147483647;
    let d = "";
    const dash = (x, y, w) => { if (x + w <= width) d += `M${x.toFixed(1)} ${Math.floor(y) + 0.5}h${w}`; };
    const chords = n === 3 || n === 4 || n === 9;
    for (let bar = 0; bar * BAR < width; bar++) {
        const x = bar * BAR;
        if (chords) {
            const up = [0, 6, 1, -2][bar % 4];
            for (let k = 0; k < 4; k++) {
                dash(x, 4 + up + k * 3, 4.5);
                dash(x + 5, 4 + (bar % 2 ? up : up + 4) + k * 3, 5);
            }
        } else if (n === 6 || n === 7) {
            for (let k = 0; k < 3; k++) dash(x + k * 3.4, 6 + (bar % 2) * 3, 1.5);
            for (let k = 0; k < 4; k++) dash(x + k * 2.6, 13, 1);
        } else {
            for (let y = 1; y < 13; y += 3) {
                if (rnd() > 0.2) dash(x + 2, y, 1.1);
                if (rnd() > 0.5) dash(x + 7, y, 1.1);
            }
        }
        for (let k = 0; k < 4; k++) {
            if (!chords && n !== 7) dash(x + k * 2.6, 14, 1.1);
            if (n !== 6) dash(x + k * 2.6, 17, 1.1);
        }
        for (let k = 0; k < 4; k++) {
            dash(x + k * 2.6, rnd() > 0.4 ? 20 : 22, 2);
            if (rnd() > 0.6) dash(x + k * 2.6, 21, 1.5);
        }
        dash(x + rnd() * 4, 25, 3);
        if (bar % 2) dash(x + 6, 27, 3);
        if (n !== 7) dash(x + 1 + rnd() * 5, 31, 3);
        dash(x + (bar % 2 ? 1 : 5), 34, bar % 2 ? 7 : 2);
        if (bar % 2) dash(x + 7, 32, 1.5);
        dash(x + 3, 36, 1.5);
    }
    return `<path d="${d}" fill="none" stroke="#aebabc"/>`;
}

document.getElementById("patterns").innerHTML = Array.from({ length: 10 }, (_, i) => `
    <div class="item">${icon}
        <svg width="56" height="15"><text x="0" y="12" textLength="${i === 9 ? 54 : 48}" lengthAdjust="spacingAndGlyphs">Pattern ${i + 1}</text></svg>
        <svg class="preview" width="56" height="11" viewBox="0 0 80 38" preserveAspectRatio="none">${notes(i + 1, 80)}</svg>
        ${i === 3 ? '<svg class="current" width="8" height="11"><path d="M1 0l6 5.500L1 11z" fill="#e04560" stroke="#3a1a22" stroke-width=".6"/></svg>' : ""}
    </div>`).join("");

document.getElementById("tracks").innerHTML = Array.from({ length: 12 }, (_, i) => `
    <div class="track${i > 3 ? " empty" : ""}${i === 3 ? " selected" : ""}">
        <svg width="60" height="20"><text x="2" y="13" textLength="${i > 8 ? 43 : 37}" lengthAdjust="spacingAndGlyphs">Track ${i + 1}</text></svg>
        <span class="dots">...</span><span class="led"></span>
    </div>`).join("");

document.getElementById("ruler").innerHTML = Array.from({ length: 25 }, (_, i) => `<span>${i * 4 + 1}</span>`).join("");

const lanes = Array.from({ length: 12 }, () => "");
let map = "";
const mapLine = (lane, x, w) => { map += `M${x - 270} ${[1.5, 4.5, 7.5, 10.5][lane]}h${w}`; };

clips.forEach(([lane, x, n]) => {
    const w = n === 9 ? 35 : 41.2;
    const cut = n === 9 ? "P..9" : `Pa..${n}`;
    lanes[lane] += `<div class="clip${n === 9 ? " muted" : ""}" style="left:${x - ORIGIN}px;width:${w}px">
        <div class="clip-head">${icon}${cut}</div><svg width="${w - 1}" height="38">${notes(n, w)}</svg></div>`;
    mapLine(lane, x, w);
});

crashes.forEach(([lane, x, w]) => {
    lanes[lane] += `<div class="audio crash" style="left:${x - ORIGIN}px;width:${w}px"><span class="tag" style="left:0;width:${w}px"></span>
        <svg width="${w}" height="51" viewBox="0 0 6 51" preserveAspectRatio="none"><path d="M0 22l1-1 .5-5 1 3 1-4 1 2 1.500-1v32l-1 2-1-2-1 2-1-3-1 1-.5-6z" fill="#cbb5ca"/></svg></div>`;
    mapLine(lane, x, w);
});

hits.forEach(([lane, x, w = 5]) => {
    lanes[lane] += `<div class="audio hit" style="left:${x - ORIGIN}px;width:${w}px"><span class="tag" style="left:1px;width:${w - 1}px"></span>
        <svg width="${w}" height="51" viewBox="0 0 5 51" preserveAspectRatio="none"><path d="M0 20h1l1.500 10 2.500 4-2.500 4-1.500 10H0z" fill="#b9cfbd"/></svg></div>`;
    mapLine(lane, x, w);
});

// the reversed hit under the playhead
lanes[3] += `<div class="audio hit" style="left:6px;width:5px"><span class="tag" style="left:0;width:4px"></span>
    <svg width="5" height="51"><path d="M5 20H4L2.500 30 0 34l2.500 3L4 48h1z" fill="#b9cfbd"/></svg></div>`;

document.getElementById("lanes").innerHTML = lanes.map(c => `<div class="lane">${c}</div>`).join("");
document.getElementById("minimap").innerHTML = `<path d="${map}" stroke="#84939a"/><path d="M4 0v13" stroke="#a9d53c" stroke-width="3"/>`;

document.querySelectorAll(".cond text[textLength], .crumbs text, .btn text").forEach(t => t.setAttribute("lengthAdjust", "spacingAndGlyphs"));
```
